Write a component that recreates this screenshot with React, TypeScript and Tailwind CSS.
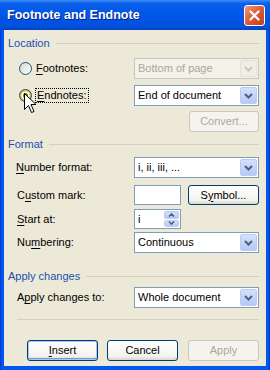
import React from "react";

const font = { fontFamily: '"Liberation Sans", Arial, sans-serif' };

function Chevron({ color }: { color: string }) {
  return (
    <svg width="9" height="6" viewBox="0 0 9 6">
      <path d="M1 1 L4.5 4.5 L8 1" fill="none" stroke={color} strokeWidth="2" />
    </svg>
  );
}

function Select({ value, disabled }: { value: string; disabled?: boolean }) {
  return (
    <div
      className={`h-full w-full flex items-stretch border p-px ${
        disabled ? "border-[#C9C7BA] bg-[#F2F1EA]" : "border-[#7F9DB9] bg-white"
      }`}
    >
      <span
        className={`flex-1 flex items-center pl-[2px] ${
          disabled ? "text-[#ACA899]" : "text-black"
        }`}
      >
        {value}
      </span>
      <span
        className={`w-[17px] rounded-[2px] border flex items-center justify-center ${
          disabled
            ? "border-[#E4E2D8] bg-[#EEEDE6]"
            : "border-[#B9CCF6] bg-[linear-gradient(to_bottom,#D4E0FB,#B6C9F5)]"
        }`}
      >
        <Chevron color={disabled ? "#C9C7BA" : "#4D6185"} />
      </span>
    </div>
  );
}

function Button({
  children,
  w,
  disabled,
  def,
}: {
  children: React.ReactNode;
  w: string;
  disabled?: boolean;
  def?: boolean;
}) {
  return (
    <div
      className={`${w} h-full rounded-[3px] border flex items-center justify-center ${
        disabled
          ? "border-[#C9C7BA] bg-[#F4F3EE] text-[#ACA899]"
          : def
          ? "border-[#003C74] bg-[linear-gradient(to_bottom,#FFFFFF,#F3F3EF_80%,#D9D5CA)] text-black shadow-[inset_0_0_0_1px_#A9C7F5,inset_0_-1px_0_1px_#6C9BE0]"
          : "border-[#003C74] bg-[linear-gradient(to_bottom,#FFFFFF,#F3F3EF_80%,#D9D5CA)] text-black"
      }`}
    >
      {children}
    </div>
  );
}

function U({ children }: { children: React.ReactNode }) {
  return <span className="underline underline-offset-[2px]">{children}</span>;
}

function GroupHeader({ label }: { label: string }) {
  return (
    <div className="h-[14px] flex items-center gap-[6px]">
      <span className="text-[#1D4FB0] leading-none">{label}</span>
      <div className="flex-1 h-px bg-[#D4D0C0]" />
    </div>
  );
}

function Radio({ checked }: { checked?: boolean }) {
  return (
    <div
      className={`w-[13px] h-[13px] rounded-full border border-[#1C5180] flex items-center justify-center ${
        checked
          ? "bg-[radial-gradient(circle,#FFFFFF_45%,#F8B636_60%,#E3912A)]"
          : "bg-[linear-gradient(135deg,#D6D6CE,#FFFFFF)]"
      }`}
    >
      {checked && <div className="w-[5px] h-[5px] rounded-full bg-[#21A121]" />}
    </div>
  );
}

export default function App() {
  return (
    <div
      className="w-[270px] h-[370px] flex flex-col bg-[linear-gradient(to_right,#0831D9,#0058EE_2px,#0058EE_268px,#0831D9)] text-[11px] relative"
      style={font}
    >
      {/* Title bar */}
      <div className="h-[30px] flex items-center justify-between pl-[7px] pr-[5px] bg-[linear-gradient(to_bottom,#3C8CF7,#0A5FEA_12%,#0056E6_50%,#0052DE_85%,#0043C4)]">
        <span className="text-white font-bold text-[12.5px] [text-shadow:1px_1px_0_#0A1E8C]">
          Footnote and Endnote
        </span>
        <div className="w-[21px] h-[21px] rounded-[3px] border border-white bg-[linear-gradient(135deg,#F09A7C,#DC5A35_50%,#C0401F)] flex items-center justify-center">
          <svg width="11" height="11" viewBox="0 0 11 11">
            <path d="M1.5 1.5 L9.5 9.5 M9.5 1.5 L1.5 9.5" stroke="white" strokeWidth="2.2" strokeLinecap="round" />
          </svg>
        </div>
      </div>

      {/* Client */}
      <div className="flex-1 mx-[4px] mb-[4px] bg-[#ECE9D8] flex flex-col pl-[4px] pr-[7px]">
        <div className="mt-[6px]">
          <GroupHeader label="Location" />
        </div>

        <div className="mt-[8px] h-[21px] flex">
          <div className="w-[126px] flex items-center pl-[11px] gap-[3px]">
            <Radio />
            <span className="ml-[1px]">
              <U>F</U>ootnotes:
            </span>
          </div>
          <div className="w-[125px]">
            <Select value="Bottom of page" disabled />
          </div>
        </div>

        <div className="mt-[6px] h-[21px] flex">
          <div className="w-[126px] flex items-center pl-[11px] gap-[3px]">
            <Radio checked />
            <span className="border border-dotted border-black px-[1px] leading-[13px]">
              <U>E</U>ndnotes:
            </span>
          </div>
          <div className="w-[125px]">
            <Select value="End of document" />
          </div>
        </div>

        <div className="mt-[5px] h-[21px] flex justify-end">
          <Button w="w-[70px]" disabled>
            Convert...
          </Button>
        </div>

        <div className="mt-[5px]">
          <GroupHeader label="Format" />
        </div>

        <div className="mt-[6px] h-[21px] flex">
          <div className="w-[126px] flex items-center pl-[8px]">
            <span>
              <U>N</U>umber format:
            </span>
          </div>
          <div className="w-[125px]">
            <Select value="i, ii, iii, ..." />
          </div>
        </div>

        <div className="mt-[7px] h-[20px] flex">
          <div className="w-[126px] flex items-center pl-[9px]">
            <span>
              C<U>u</U>stom mark:
            </span>
          </div>
          <div className="w-[125px] flex justify-between">
            <div className="w-[47px] h-full border border-[#7F9DB9] bg-white" />
            <Button w="w-[71px]">
              S<U>y</U>mbol...
            </Button>
          </div>
        </div>

        <div className="mt-[4px] h-[20px] flex">
          <div className="w-[126px] flex items-center pl-[9px]">
            <span>
              <U>S</U>tart at:
            </span>
          </div>
          <div className="w-[125px] flex">
            <div className="w-[47px] h-full border border-[#7F9DB9] bg-white flex items-stretch p-px">
              <span className="flex-1 flex items-center pl-[2px]">i</span>
              <div className="w-[15px] flex flex-col gap-px">
                <div className="flex-1 rounded-[2px] border border-[#B9CCF6] bg-[linear-gradient(to_bottom,#D4E0FB,#B6C9F5)] flex items-center justify-center">
                  <svg width="7" height="4" viewBox="0 0 7 4">
                    <path d="M1 3.5 L3.5 1 L6 3.5" fill="none" stroke="#4D6185" strokeWidth="1.6" />
                  </svg>
                </div>
                <div className="flex-1 rounded-[2px] border border-[#B9CCF6] bg-[linear-gradient(to_bottom,#D4E0FB,#B6C9F5)] flex items-center justify-center">
                  <svg width="7" height="4" viewBox="0 0 7 4">
                    <path d="M1 0.5 L3.5 3 L6 0.5" fill="none" stroke="#4D6185" strokeWidth="1.6" />
                  </svg>
                </div>
              </div>
            </div>
          </div>
        </div>

        <div className="mt-[3px] h-[21px] flex">
          <div className="w-[126px] flex items-center pl-[9px]">
            <span>
              Nu<U>m</U>bering:
            </span>
          </div>
          <div className="w-[125px]">
            <Select value="Continuous" />
          </div>
        </div>

        <div className="mt-[16px]">
          <GroupHeader label="Apply changes" />
        </div>

        <div className="mt-[4px] h-[21px] flex">
          <div className="w-[126px] flex items-center pl-[9px]">
            <span>
              A<U>p</U>ply changes to:
            </span>
          </div>
          <div className="w-[125px]">
            <Select value="Whole document" />
          </div>
        </div>

        <div className="mt-[11px] ml-[9px] h-px bg-[#D4D0C0]" />

        <div className="mt-[20px] h-[21px] flex">
          <div className="ml-[19px]">
            <Button w="w-[71px]" def>
              <U>I</U>nsert
            </Button>
          </div>
          <div className="ml-[9px]">
            <Button w="w-[71px]">Cancel</Button>
          </div>
          <div className="ml-[10px]">
            <Button w="w-[71px]" disabled>
              Apply
            </Button>
          </div>
        </div>
      </div>

      {/* mouse cursor overlay */}
      <svg
        className="absolute left-[24px] top-[93px]"
        width="13"
        height="21"
        viewBox="0 0 13 21"
      >
        <path
          d="M0.5 0.5 L0.5 16.5 L4.5 12.5 L7.5 19.5 L10 18.5 L7 11.5 L12 11.5 Z"
          fill="white"
          stroke="black"
          strokeWidth="1"
          strokeLinejoin="miter"
        />
      </svg>
    </div>
  );
}
